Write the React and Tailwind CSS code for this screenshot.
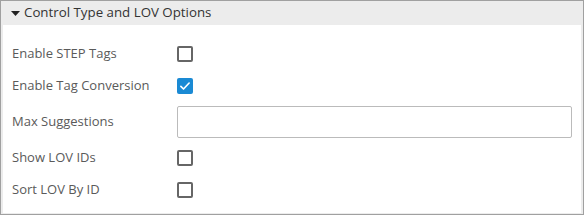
import { useState } from "react";

function Checkbox({ checked, onChange }) {
  return (
    <button
      type="button"
      onClick={onChange}
      className={
        checked
          ? "flex h-4 w-4 items-center justify-center rounded-[2px] bg-[#1a8ad4]"
          : "h-4 w-4 rounded-[2px] border-2 border-[#666666] bg-white"
      }
    >
      {checked && (
        <svg viewBox="0 0 16 16" className="h-3 w-3" fill="none" stroke="white" strokeWidth={2.2}>
          <path d="M2.5 8.5l3.5 3.5 7.5-8" strokeLinecap="round" strokeLinejoin="round" />
        </svg>
      )}
    </button>
  );
}

function Row({ label, children, tall }) {
  return (
    <div className={`flex items-center ${tall ? "h-10" : "h-8"}`}>
      <span className="w-[165px] shrink-0 text-[13px] text-[#5a5a5a]">{label}</span>
      {children}
    </div>
  );
}

export default function App() {
  const [opts, setOpts] = useState({ step: false, conv: true, ids: false, sort: false });
  const toggle = (k) => setOpts((o) => ({ ...o, [k]: !o[k] }));

  return (
    <div
      className="h-[215px] w-[584px] border border-[#a0a0a0] bg-[#ececec] px-[2px] pb-[2px]"
      style={{ fontFamily: '"Open Sans", "Noto Sans", sans-serif' }}
    >
      <div className="flex h-6 items-center gap-[4px] pl-[8px]">
        <svg viewBox="0 0 9 5" className="h-[5px] w-[9px]">
          <path d="M0 0h9L4.5 5z" fill="#222" />
        </svg>
        <span className="text-[13.3px] text-[#333333]">Control Type and LOV Options</span>
      </div>
      <div className="h-[188px] bg-white pl-[9px] pr-[9px] pt-[13px]">
        <Row label="Enable STEP Tags">
          <Checkbox checked={opts.step} onChange={() => toggle("step")} />
        </Row>
        <Row label="Enable Tag Conversion">
          <Checkbox checked={opts.conv} onChange={() => toggle("conv")} />
        </Row>
        <Row label="Max Suggestions" tall>
          <input className="h-8 flex-1 rounded-[2px] border border-[#bbbbbb] px-2 text-[13px] outline-none" />
        </Row>
        <Row label="Show LOV IDs">
          <Checkbox checked={opts.ids} onChange={() => toggle("ids")} />
        </Row>
        <Row label="Sort LOV By ID">
          <Checkbox checked={opts.sort} onChange={() => toggle("sort")} />
        </Row>
      </div>
    </div>
  );
}
